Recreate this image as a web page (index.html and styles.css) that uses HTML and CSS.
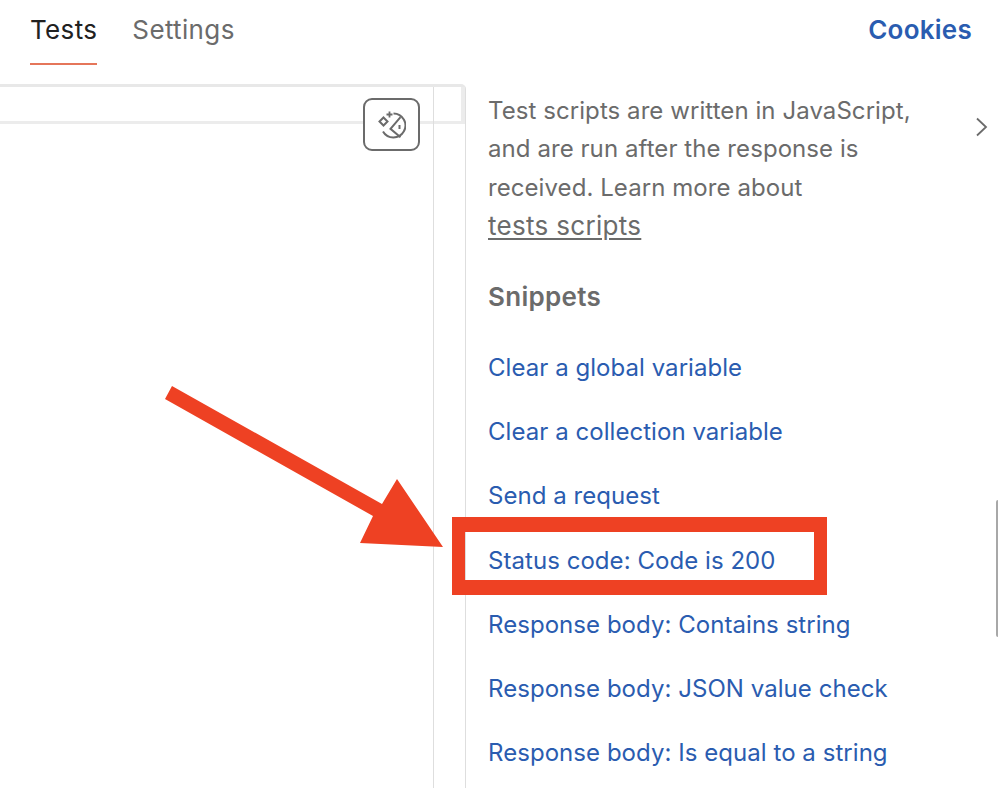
FILE: index.html
```html
<!DOCTYPE html>
<html lang="en">
<head>
<meta charset="utf-8">
<title>Tests</title>
<link rel="stylesheet" href="styles.css">
</head>
<body>
<div class="page">
  <header class="topbar">
    <nav class="tabs">
      <span class="tab active">Tests</span>
      <span class="tab">Settings</span>
    </nav>
    <a class="cookies">Cookies</a>
  </header>
  <main class="content">
    <section class="editor">
      <div class="toolbar"></div>
      <div class="gutter"></div>
      <button class="magic" aria-label="Generate">
        <svg width="28" height="28" viewBox="0 0 28 28" fill="none" stroke="#6b6b6b" stroke-width="2">
          <path d="M15.5 2.5A12 12 0 1 1 5 20.5"/>
          <path d="M22.5 6.2 12.5 17.8l10 8.4"/>
          <path d="M21.5 14v4"/>
          <path d="M5.5 6.5 9.5 10.5 5.5 14.5 1.5 10.5Z"/>
          <path d="M11.5 0.5v6M8.5 3.5h6" stroke-width="1.8"/>
        </svg>
      </button>
    </section>
    <aside class="side">
      <div class="intro">
        <p class="desc">Test scripts are written in JavaScript, and are run after the response is received. Learn more about<br><a class="doc">tests scripts</a></p>
        <svg class="chevron" width="14" height="20" viewBox="0 0 14 20" fill="none" stroke="#6b6b6b" stroke-width="1.8"><path d="M2 1.5 11 10 2 18.5"/></svg>
      </div>
      <h2 class="heading">Snippets</h2>
      <ul class="snippets">
        <li>Clear a global variable</li>
        <li>Clear a collection variable</li>
        <li>Send a request</li>
        <li>Status code: Code is 200</li>
        <li>Response body: Contains string</li>
        <li>Response body: JSON value check</li>
        <li>Response body: Is equal to a string</li>
      </ul>
      <div class="scrollbar"></div>
    </aside>
  </main>
  <svg class="annotation" width="998" height="788" viewBox="0 0 998 788">
    <path class="mark" d="M172 386 382 504 397 479 443 547 360 543 373 516 165 399Z"/>
    <path class="mark" fill-rule="evenodd" d="M452 517H827V595H452ZM465 532V580H814V532Z"/>
  </svg>
</div>
</body>
</html>
```
FILE: styles.css
```css
* { box-sizing: border-box; }
html, body { margin: 0; padding: 0; background: #fff; }
.page {
  position: relative;
  width: 998px;
  height: 788px;
  overflow: hidden;
  font-family: Inter, "Liberation Sans", sans-serif;
  font-size: 24px;
  letter-spacing: 0.05px;
}
.topbar {
  display: flex;
  justify-content: space-between;
  align-items: flex-start;
  height: 84px;
  padding: 0 26px 0 30px;
}
.tabs { display: flex; gap: 35px; }
.tab {
  height: 65px;
  padding-top: 13px;
  line-height: 34px;
  font-size: 26px;
  letter-spacing: 0.35px;
  color: #6b6b6b;
}
.tab.active {
  color: #212121;
  border-bottom: 2px solid #e5765a;
}
.cookies {
  padding-top: 13px;
  line-height: 34px;
  font-size: 26px;
  font-weight: 600;
  letter-spacing: 0.25px;
  color: #2a5cb0;
}
.content { display: flex; height: 704px; }
.editor {
  position: relative;
  flex: none;
  width: 466px;
  border-top: 3px solid #e8e8e8;
  border-right: 1px solid #dedede;
  border-top-right-radius: 5px;
}
.toolbar {
  height: 37px;
  border-bottom: 3px solid #ececec;
  border-right: 4px solid #ececec;
}
.gutter {
  position: absolute;
  top: 0;
  bottom: 0;
  left: 433px;
  width: 1px;
  background: #dedede;
}
.magic {
  position: absolute;
  top: 11px;
  left: 363px;
  width: 57px;
  height: 53px;
  display: flex;
  align-items: center;
  justify-content: center;
  padding: 0;
  background: #fff;
  border: 2px solid #6b6b6b;
  border-radius: 9px;
}
.side {
  position: relative;
  flex: 1;
  padding: 8px 0 0 22px;
}
.intro { display: flex; }
.desc {
  margin: 0;
  width: 440px;
  line-height: 38.4px;
  letter-spacing: 0.07px;
  color: #6b6b6b;
}
.doc {
  font-size: 26px;
  letter-spacing: 0.3px;
  text-decoration: underline;
  text-decoration-thickness: 1.5px;
  text-underline-offset: 3px;
}
.chevron { position: absolute; left: 509px; top: 33px; }
.heading {
  margin: 31px 0 0;
  font-size: 26px;
  font-weight: 600;
  letter-spacing: 0.3px;
  line-height: 38px;
  color: #6b6b6b;
}
.snippets {
  list-style: none;
  margin: 33px 0 0;
  padding: 0;
  display: flex;
  flex-direction: column;
  gap: 26px;
}
.snippets li {
  line-height: 38.3px;
  color: #2a5cb0;
  white-space: nowrap;
}
.scrollbar {
  position: absolute;
  right: 0;
  top: 416px;
  width: 2px;
  height: 137px;
  background: #a8a8a8;
  border-radius: 2px 0 0 2px;
}
.annotation { position: absolute; top: 0; left: 0; }
.mark { fill: #ee4123; }
```
